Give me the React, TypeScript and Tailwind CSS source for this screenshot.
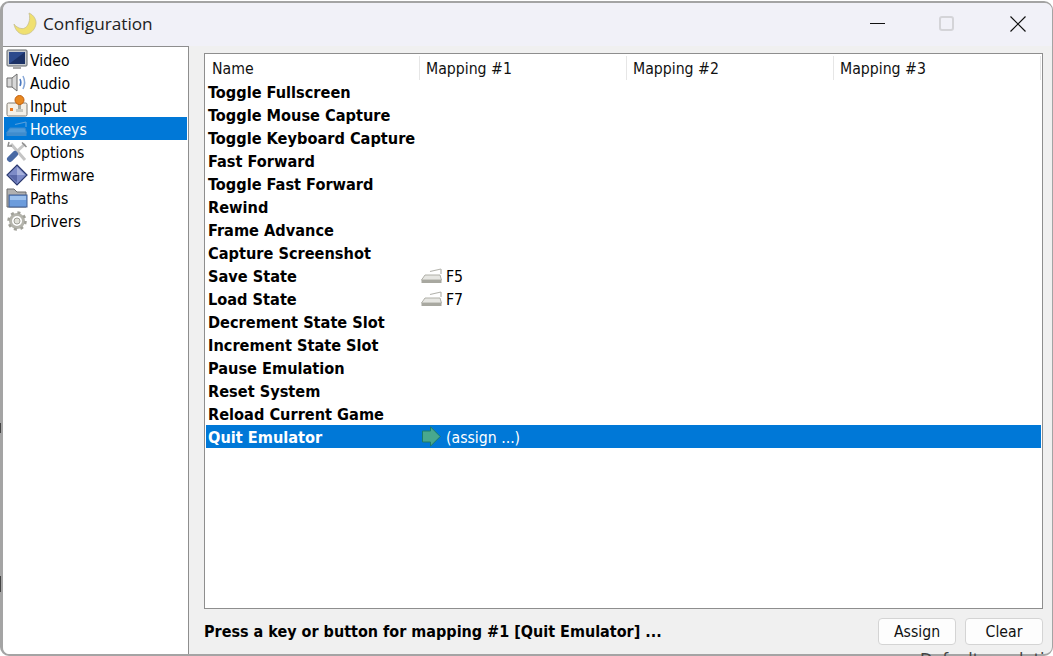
import React from "react";

const rows = [
  "Toggle Fullscreen",
  "Toggle Mouse Capture",
  "Toggle Keyboard Capture",
  "Fast Forward",
  "Toggle Fast Forward",
  "Rewind",
  "Frame Advance",
  "Capture Screenshot",
  "Save State",
  "Load State",
  "Decrement State Slot",
  "Increment State Slot",
  "Pause Emulation",
  "Reset System",
  "Reload Current Game",
  "Quit Emulator",
];

function Moon() {
  return (
    <svg width="24" height="24" viewBox="0 0 24 24">
      <path d="M16 1 C21 3 23.5 8 23 12 C22 18 17 22.5 11.5 22.5 C6 22.5 2 18 1 12 C3 15 7 17 10.5 16.5 C15 15.5 18 8 16 1 Z" fill="#f0e070" stroke="#c8c090" strokeWidth="0.8" />
    </svg>
  );
}

function Keyboard({ light = false }: { light?: boolean }) {
  return (
    <svg width="21" height="16" viewBox="0 0 21 16">
      <path d="M9 3.5 L20 1" fill="none" stroke={light ? "#5aa0dc" : "#b4b4ae"} strokeWidth="1.2" />
      <path d="M20 1 V6" fill="none" stroke={light ? "#5aa0dc" : "#b4b4ae"} strokeWidth="1.2" />
      <path d="M4 7 L19 7 L20.5 12 L0.5 12 Z" fill={light ? "#4f9ad8" : "#e6e6e2"} stroke={light ? "#3b88cc" : "#b0b0a8"} />
      <path d="M0.5 12 H20.5 V15 H0.5 Z" fill={light ? "#3f8ccc" : "#a8a8a0"} />
    </svg>
  );
}

function GreenArrow() {
  return (
    <svg width="19" height="21" viewBox="0 0 19 21">
      <path d="M0.5 5 H8.5 V0.8 L18.2 10.5 L8.5 20.2 V16 H0.5 Z" fill="#48a88e" stroke="#1c7a6a" strokeWidth="1" />
    </svg>
  );
}

function VideoIcon() {
  return (
    <svg width="22" height="22" viewBox="0 0 22 22">
      <rect x="1" y="1" width="20" height="16" rx="1" fill="#c8ccd0" stroke="#606468" />
      <rect x="3" y="3" width="16" height="12" fill="#2c4a8c" />
      <path d="M3 15 L19 3 L19 15 Z" fill="#1c3266" />
      <path d="M7 18 H15 V20 H7 Z" fill="#a8a8a8" />
    </svg>
  );
}

function AudioIcon() {
  return (
    <svg width="22" height="22" viewBox="0 0 22 22">
      <path d="M1 6 H6 L11 2 V19 L6 15 H1 Z" fill="#d8d8d8" stroke="#6c6c6c" />
      <path d="M6 6 V15" stroke="#808080" />
      <path d="M14 7 C15 9 15 12 14 14" fill="none" stroke="#4a78c0" strokeWidth="1.5" />
      <path d="M17 4 C19 8 19 13 17 17" fill="none" stroke="#88a8d8" strokeWidth="1.5" />
    </svg>
  );
}

function InputIcon() {
  return (
    <svg width="22" height="22" viewBox="0 0 22 22">
      <rect x="1" y="8" width="20" height="13" rx="1.5" fill="#f4f0e8" stroke="#807c74" />
      <rect x="4" y="13" width="3" height="3" fill="#e87820" />
      <rect x="12" y="8" width="3" height="7" fill="#a8a8a0" />
      <rect x="10" y="14" width="7" height="3" fill="#c8c8c0" />
      <circle cx="13.5" cy="5" r="4.5" fill="#e88820" stroke="#c06010" />
    </svg>
  );
}

function OptionsIcon() {
  return (
    <svg width="22" height="22" viewBox="0 0 22 22">
      <path d="M5 3 L19 19" stroke="#c4c4c4" strokeWidth="3" />
      <path d="M19 3 L8 13" stroke="#c8c8c8" strokeWidth="3" />
      <path d="M16 1.5 L20.5 6" stroke="#8c8c8c" strokeWidth="1.5" />
      <path d="M3 1 L2 5 L6 5" fill="none" stroke="#8c8c8c" strokeWidth="1.5" />
      <path d="M9 13 L4 18" stroke="#4a6aa4" strokeWidth="6" strokeLinecap="round" />
    </svg>
  );
}

function FirmwareIcon() {
  return (
    <svg width="22" height="22" viewBox="0 0 22 22">
      <path d="M11 1 L21 11 L11 21 L1 11 Z" fill="#7e8cc8" stroke="#2c3a70" strokeWidth="1.2" />
      <path d="M11 3 L19 11 L11 11 Z" fill="#a8b2dc" />
      <path d="M3 11 L11 19 L11 11 Z" fill="#5a68a8" />
    </svg>
  );
}

function PathsIcon() {
  return (
    <svg width="22" height="22" viewBox="0 0 22 22">
      <path d="M1 2 H8 L11 5 H20 V20 H1 Z" fill="#b0b0b0" stroke="#6c6c6c" />
      <rect x="3" y="8" width="18" height="12" fill="#6c9cdc" stroke="#405c90" />
      <rect x="4" y="9" width="16" height="4" fill="#9cc0ec" />
    </svg>
  );
}

function DriversIcon() {
  return (
    <svg width="22" height="22" viewBox="0 0 22 22">
      <circle cx="11" cy="11" r="6.5" fill="none" stroke="#b4b4ac" strokeWidth="3" />
      <circle cx="11" cy="11" r="8.5" fill="none" stroke="#a0a098" strokeWidth="2.5" strokeDasharray="3 3.7" />
      <circle cx="11" cy="11" r="3" fill="#e0e0d8" stroke="#a0a098" />
    </svg>
  );
}

const nav: [string, React.ReactNode][] = [
  ["Video", <VideoIcon />],
  ["Audio", <AudioIcon />],
  ["Input", <InputIcon />],
  ["Hotkeys", <Keyboard light />],
  ["Options", <OptionsIcon />],
  ["Firmware", <FirmwareIcon />],
  ["Paths", <PathsIcon />],
  ["Drivers", <DriversIcon />],
];

export default function App() {
  return (
    <div className="relative w-[1053px] h-[656px] overflow-hidden bg-white text-black font-['DejaVu_Sans_Condensed','DejaVu_Sans',sans-serif] text-[15.7px] leading-[23px]">
      <div className="flex flex-col w-[1053px] h-[655px] mt-px border-t-2 border-l-[3px] border-r border-b-[2px] border-[#a4a4a4] rounded-[9px] overflow-hidden bg-[#f0f0f0]">
        <div className="flex items-center h-[43px] shrink-0 bg-[#f1f1f8] pl-[10px] pb-[2px]">
          <Moon />
          <span className="ml-[6px] font-['Open_Sans',sans-serif] text-[17.2px] text-[#222]">Configuration</span>
          <div className="ml-auto flex items-center">
            <div className="w-[15px] h-px bg-[#111] mr-[54px]" />
            <div className="w-[15px] h-[15px] border-2 border-[#d4d4d8] rounded-[3px] mr-[56px]" />
            <svg width="16" height="16" viewBox="0 0 16 16" className="mr-[26px]">
              <path d="M0.5 0.5 L15.5 15.5 M15.5 0.5 L0.5 15.5" stroke="#111" strokeWidth="1.2" />
            </svg>
          </div>
        </div>
        <div className="flex flex-1 min-h-0">
          <div className="w-[186px] shrink-0 bg-white border-t border-r border-[#8e8e8e] pt-px pl-px pr-px">
            {nav.map(([label, icon]) => (
              <div key={label} className={`flex items-center h-[23px] ${label === "Hotkeys" ? "bg-[#0078d7] text-white" : ""}`}>
                <span className="flex items-center justify-center w-[25px] shrink-0">{icon}</span>
                <span className="ml-px self-start leading-[25px]">{label}</span>
              </div>
            ))}
          </div>
          <div className="flex flex-col flex-1 min-w-0 pl-[15px] pr-[9px] pt-[7px]">
            <div className="flex-1 min-h-0 bg-white border border-[#8e8e8e] pl-px pr-px">
              <div className="flex h-[26px] pt-[2px]">
                {["Name", "Mapping #1", "Mapping #2", "Mapping #3"].map((h, i) => (
                  <div key={h} className={`pl-[6px] border-r border-[#e6e6e6] leading-[25px] ${i === 0 ? "w-[214px]" : "w-[207px]"} text-[#111]`}>{h}</div>
                ))}
              </div>
              {rows.map((r) => {
                const sel = r === "Quit Emulator";
                const map = r === "Save State" ? "F5" : r === "Load State" ? "F7" : sel ? "(assign ...)" : "";
                return (
                  <div key={r} className={`flex h-[23px] items-center ${sel ? "bg-[#0078d7] text-white" : ""}`}>
                    <div className="w-[214px] pl-[2px] font-bold text-[16.2px] self-start leading-[25px] whitespace-nowrap">{r}</div>
                    {map && (
                      <div className="flex items-center pl-[1px] h-[23px]">
                        <span className="flex items-center justify-center w-[21px] mr-[4px]">{sel ? <GreenArrow /> : <Keyboard />}</span>
                        <span className="self-start leading-[25px]">{map}</span>
                      </div>
                    )}
                  </div>
                );
              })}
            </div>
            <div className="flex items-center h-[45px] shrink-0">
              <span className="font-bold text-[16px] whitespace-nowrap">Press a key or button for mapping #1 [Quit Emulator] ...</span>
              <button className="ml-auto w-[78px] h-[27px] bg-[#fdfdfd] border border-[#d4d4d4] rounded-[4px] text-[#111]">Assign</button>
              <button className="ml-[9px] w-[78px] h-[27px] bg-[#fdfdfd] border border-[#d4d4d4] rounded-[4px] text-[#111]">Clear</button>
            </div>
          </div>
        </div>
      </div>
      <div className="absolute left-[920px] top-[651px] h-[5px] overflow-hidden text-[#444] text-[18px] leading-[18px] whitespace-nowrap">Default resolution</div>
      <div className="absolute left-0 top-[423px] w-px h-[10px] bg-[#444]" />
      <div className="absolute left-0 top-[576px] w-px h-[16px] bg-[#444]" />
    </div>
  );
}
